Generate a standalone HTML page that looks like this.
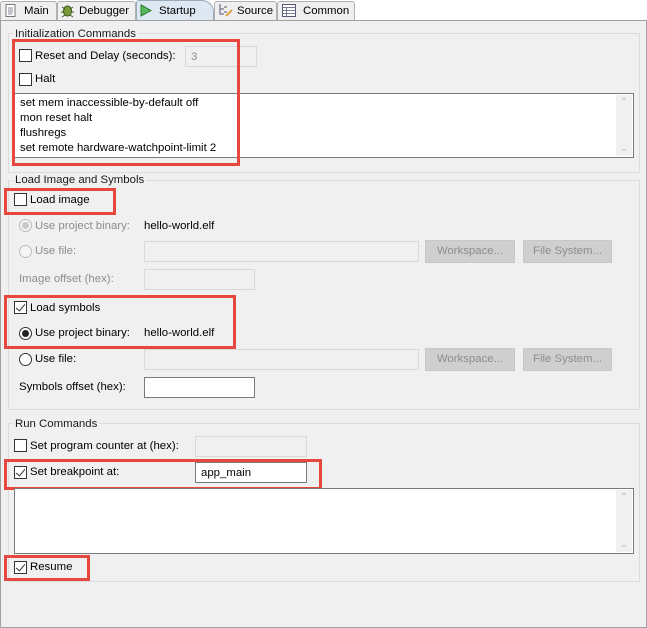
<!DOCTYPE html>
<html><head><style>
*{box-sizing:border-box}
body{margin:0;width:647px;height:628px;background:#fff;font-family:"Liberation Sans",sans-serif;font-size:11.4px;color:#000;position:relative;overflow:hidden}
.a{position:absolute}
.t{position:absolute;white-space:nowrap;line-height:14px}
.g{color:#8d8d8d}
.grp{position:absolute;border:1px solid #dcdcdc}
.lbl{position:absolute;background:#f0f0f0;padding:0 2px;line-height:14px;color:#1a1a1a}
.cb{position:absolute;width:13px;height:13px;border:1px solid #333;background:#fff}
.cb.k::after{content:"";position:absolute;left:3px;top:0px;width:4px;height:8px;border:solid #333;border-width:0 1.5px 1.5px 0;transform:rotate(40deg)}
.rd{position:absolute;width:13px;height:13px;border:1px solid #333;border-radius:50%;background:#fff}
.rd.dis{border-color:#bbb;background:#f4f4f4}
.rd.dis::after{content:"";position:absolute;left:2px;top:2px;width:7px;height:7px;border-radius:50%;background:#c8c8c8}
.rd.on::after{content:"";position:absolute;left:2px;top:2px;width:7px;height:7px;border-radius:50%;background:#222}
.in{position:absolute;border:1px solid #d8d8d8;background:#f0f0f0}
.inw{position:absolute;border:1px solid #7a7a7a;background:#fff}
.btn{position:absolute;border:1px solid #c8c8c8;background:#cfcfcf;color:#8d8d8d;text-align:center;line-height:20px}
.red{position:absolute;border:3px solid #e8473f}
.ta{position:absolute;border:1px solid #7a7a7a;background:#fff}
.sb{position:absolute;right:1px;top:1px;bottom:1px;width:16px;background:#f0f0f0;color:#bdbdbd;font-size:10px;text-align:center}
</style></head><body>
<div class="a" style="left:0;top:0;width:647px;height:21px;background:#fff"></div>
<div class="a" style="left:0;top:1px;width:57px;height:20px;border:1px solid #b0b0b0;border-bottom:none;background:#efefef;border-radius:3px 3px 0 0"></div>
<div class="a" style="left:57px;top:1px;width:79px;height:20px;border:1px solid #b0b0b0;border-bottom:none;background:#efefef;border-radius:3px 3px 0 0"></div>
<div class="a" style="left:136px;top:0;width:78px;height:21px;border:1px solid #9ab;border-bottom:none;background:#dde8f2;border-radius:3px 12px 0 0"></div>
<div class="a" style="left:214px;top:1px;width:63px;height:20px;border:1px solid #b0b0b0;border-bottom:none;background:#efefef;border-radius:3px 3px 0 0"></div>
<div class="a" style="left:277px;top:1px;width:78px;height:20px;border:1px solid #b0b0b0;border-bottom:none;background:#efefef;border-radius:3px 3px 0 0"></div>
<svg class="a" style="left:5px;top:4px" width="12" height="13"><rect x="1" y="0.5" width="9" height="12" fill="#fff" stroke="#777"/><path d="M3 4h5M3 6h5M3 8h5M3 10h4" stroke="#889" /></svg>
<div class="t" style="left:24px;top:4px">Main</div>
<svg class="a" style="left:60px;top:3px" width="15" height="15"><ellipse cx="7.5" cy="8" rx="4" ry="5" fill="#7a9a3a" stroke="#3d5a1c"/><path d="M2 4l3 2M13 4l-3 2M1 9h3M14 9h-3M2 14l3-2M13 14l-3-2" stroke="#3d5a1c"/></svg>
<div class="t" style="left:79px;top:4px">Debugger</div>
<svg class="a" style="left:140px;top:4px" width="12" height="13"><path d="M1 1L11 6.5L1 12Z" fill="#5cb85c" stroke="#2d7a2d"/></svg>
<div class="t" style="left:159px;top:4px">Startup</div>
<svg class="a" style="left:218px;top:3px" width="15" height="15"><path d="M2 1v10h4M2 6h4M6 4h3M6 9h3" stroke="#557" fill="none"/><path d="M8 13l6-6" stroke="#d9a040" stroke-width="2"/></svg>
<div class="t" style="left:237px;top:4px">Source</div>
<svg class="a" style="left:282px;top:4px" width="14" height="13"><rect x="0.5" y="0.5" width="13" height="12" fill="#fff" stroke="#557"/><path d="M0.5 3.5h13M4.5 3.5v9M0.5 6.5h13M0.5 9.5h13" stroke="#779"/></svg>
<div class="t" style="left:303px;top:4px">Common</div>
<div class="a" style="left:0;top:20px;width:647px;height:608px;background:#f0f0f0;border:1px solid #a0a0a0"></div>

<div class="grp" style="left:8px;top:33px;width:632px;height:140px"></div>
<div class="lbl" style="left:13px;top:27px">Initialization Commands</div>
<div class="cb" style="left:19px;top:49px"></div><div class="t" style="left:35px;top:49px">Reset and Delay (seconds):</div>
<div class="in" style="left:185px;top:46px;width:72px;height:21px"><span class="t g" style="left:5px;top:3px">3</span></div>
<div class="cb" style="left:19px;top:73px"></div><div class="t" style="left:35px;top:72px">Halt</div>
<div class="ta" style="left:12px;top:93px;width:622px;height:65px"><div class="sb"><div style="margin-top:2px">&#8963;</div><div style="position:absolute;bottom:2px;width:16px">&#8964;</div></div></div>
<div class="t" style="left:20px;top:96px;line-height:15px">set mem inaccessible-by-default off<br>mon reset halt<br>flushregs<br>set remote hardware-watchpoint-limit 2</div>
<div class="red" style="left:12px;top:39px;width:228px;height:127px"></div>

<div class="grp" style="left:8px;top:180px;width:632px;height:230px"></div>
<div class="lbl" style="left:13px;top:173px">Load Image and Symbols</div>
<div class="cb" style="left:14px;top:193px"></div><div class="t" style="left:30px;top:193px">Load image</div>
<div class="red" style="left:4px;top:188px;width:112px;height:27px"></div>
<div class="rd dis" style="left:19px;top:219px"></div><div class="t g" style="left:35px;top:219px">Use project binary:</div><div class="t" style="left:144px;top:219px">hello-world.elf</div>
<div class="rd" style="left:19px;top:245px;border-color:#bbb;background:#f4f4f4"></div><div class="t g" style="left:35px;top:244px">Use file:</div>
<div class="in" style="left:144px;top:241px;width:275px;height:21px"></div>
<div class="btn" style="left:425px;top:240px;width:90px;height:23px">Workspace...</div>
<div class="btn" style="left:523px;top:240px;width:89px;height:23px">File System...</div>
<div class="t g" style="left:19px;top:272px">Image offset (hex):</div>
<div class="in" style="left:144px;top:269px;width:111px;height:21px"></div>
<div class="cb k" style="left:14px;top:301px"></div><div class="t" style="left:30px;top:301px">Load symbols</div>
<div class="rd on" style="left:19px;top:327px"></div><div class="t" style="left:35px;top:326px">Use project binary:</div><div class="t" style="left:144px;top:326px">hello-world.elf</div>
<div class="red" style="left:4px;top:295px;width:232px;height:54px"></div>
<div class="rd" style="left:19px;top:353px"></div><div class="t" style="left:35px;top:352px">Use file:</div>
<div class="in" style="left:144px;top:349px;width:275px;height:21px"></div>
<div class="btn" style="left:425px;top:348px;width:90px;height:23px">Workspace...</div>
<div class="btn" style="left:523px;top:348px;width:89px;height:23px">File System...</div>
<div class="t" style="left:19px;top:380px">Symbols offset (hex):</div>
<div class="inw" style="left:144px;top:377px;width:111px;height:21px"></div>

<div class="grp" style="left:8px;top:423px;width:632px;height:159px"></div>
<div class="lbl" style="left:13px;top:417px">Run Commands</div>
<div class="cb" style="left:14px;top:439px"></div><div class="t" style="left:30px;top:439px">Set program counter at (hex):</div>
<div class="in" style="left:195px;top:436px;width:112px;height:21px"></div>
<div class="cb k" style="left:14px;top:466px"></div><div class="t" style="left:30px;top:465px">Set breakpoint at:</div>
<div class="inw" style="left:195px;top:462px;width:112px;height:21px"><span class="t" style="left:5px;top:3px">app_main</span></div>
<div class="red" style="left:4px;top:459px;width:318px;height:31px"></div>
<div class="ta" style="left:14px;top:488px;width:620px;height:66px"><div class="sb"><div style="margin-top:2px">&#8963;</div><div style="position:absolute;bottom:2px;width:16px">&#8964;</div></div></div>
<div class="cb k" style="left:14px;top:561px"></div><div class="t" style="left:30px;top:560px">Resume</div>
<div class="red" style="left:4px;top:555px;width:86px;height:26px"></div>
</body></html>
